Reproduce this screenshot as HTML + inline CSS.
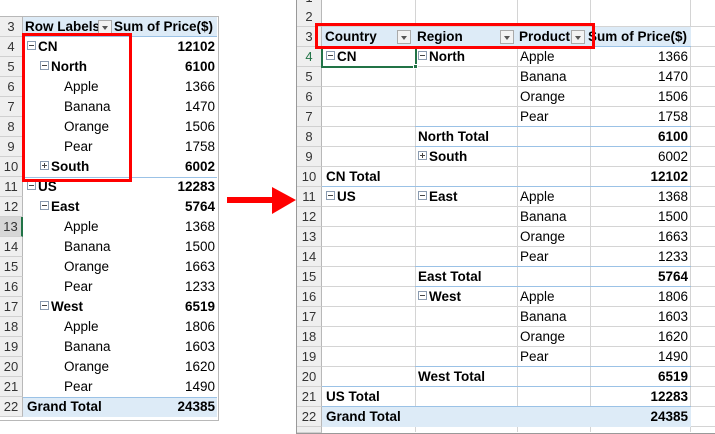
<!DOCTYPE html>
<html><head><meta charset="utf-8"><style>
body{margin:0;width:715px;height:434px;background:#fff;position:relative;overflow:hidden;font-family:"Liberation Sans",sans-serif;font-size:13.5px;color:#000}
.a{position:absolute;box-sizing:border-box;white-space:nowrap}
.rh{background:#efefef;border-bottom:1px solid #d0d0d0;border-right:1px solid #b8b8b8;text-align:center;color:#333;font-size:13px;line-height:19px}
.b{font-weight:bold}
.r{text-align:right}
.box{display:inline-block;width:9px;height:9px;border:1px solid #8a9bb0;box-sizing:border-box;vertical-align:1px;margin-right:2px;position:relative;background:#fff}
.box:after{content:"";position:absolute;left:1px;top:3px;width:5px;height:1px;background:#444}
.box.p:before{content:"";position:absolute;left:3px;top:1px;width:1px;height:5px;background:#444}
.dd{position:absolute;width:14px;height:14px;border:1px solid #aaa;background:#f3f3f3;box-sizing:border-box}
.dd:after{content:"";position:absolute;left:3px;top:5px;border-left:3.5px solid transparent;border-right:3.5px solid transparent;border-top:4px solid #555}
</style></head><body>
<div id="L"></div><div id="R"></div>
<div class="a" style="left:227px;top:197px;width:47px;height:6px;background:#f00"></div>
<div class="a" style="left:272px;top:187px;width:0;height:0;border-top:13px solid transparent;border-bottom:14px solid transparent;border-left:24px solid #f00"></div>
<script>
var L=document.getElementById('L'),R=document.getElementById('R');
function d(p,s,c,t){var e=document.createElement('div');e.className='a '+(c||'');e.style.cssText=s;if(t!=null)e.innerHTML=t;p.appendChild(e);return e;}
var B='<span class="box"></span>',P='<span class="box p"></span>';
d(L,'left:0;top:16px;width:219px;height:405px;border:1px solid #b8b8b8;border-left:none');
var ld=[[3],[4,B+'CN',0,1,'12102'],[5,B+'North',1,1,'6100'],[6,'Apple',2,0,'1366'],[7,'Banana',2,0,'1470'],[8,'Orange',2,0,'1506'],[9,'Pear',2,0,'1758'],[10,P+'South',1,1,'6002'],[11,B+'US',0,1,'12283'],[12,B+'East',1,1,'5764'],[13,'Apple',2,0,'1368'],[14,'Banana',2,0,'1500'],[15,'Orange',2,0,'1663'],[16,'Pear',2,0,'1233'],[17,B+'West',1,1,'6519'],[18,'Apple',2,0,'1806'],[19,'Banana',2,0,'1603'],[20,'Orange',2,0,'1620'],[21,'Pear',2,0,'1490'],[22,'Grand Total',0,1,'24385']];
ld.forEach(function(r,i){var y=17+i*20;
 d(L,'left:0;top:'+y+'px;width:23px;height:20px;'+(r[0]==13?'background:#d6d6d6;border-right:2px solid #217346;':''),'rh',r[0]);
 if(r[0]==3){d(L,'left:23px;top:'+y+'px;width:194px;height:20px;background:#ddebf7;border-bottom:1px solid #9bc2e6');
  d(L,'left:25px;top:'+(y+2)+'px','b','Row Labels');d(L,'left:98px;top:'+(y+3)+'px','dd');
  d(L,'left:114px;top:'+(y+2)+'px','b','Sum of Price($)');return;}
 if(r[0]==22)d(L,'left:23px;top:'+y+'px;width:194px;height:20px;background:#ddebf7;border-top:1px solid #9bc2e6');
 if(r[0]==11)d(L,'left:23px;top:'+y+'px;width:194px;height:1px;background:#9bc2e6');
 var ind=[27,40,64][r[2]];
 d(L,'left:'+ind+'px;top:'+(y+2)+'px',r[3]?'b':'',r[1]);
 d(L,'left:120px;width:95px;top:'+(y+2)+'px','r '+(r[3]?'b':''),r[4]);
});
d(L,'left:22px;top:33px;width:110px;height:149px;border:3px solid #f00');
d(R,'left:296px;top:0;width:419px;height:434px;border-left:1px solid #999;border-bottom:1px solid #999');
var cols=[322,415,517,590,690,716];
for(var i=1;i<cols.length-1;i++)d(R,'left:'+cols[i]+'px;top:0;width:1px;height:432px;background:#d4d4d4');
d(R,'left:297px;top:-12px;width:25px;height:20px','rh','1');
for(var k=2;k<=22;k++){var y=7+(k-2)*20;
 d(R,'left:297px;top:'+y+'px;width:25px;height:20px;'+(k==4?'color:#217346;':''),'rh',k);
 d(R,'left:322px;top:'+(y+19)+'px;width:394px;height:1px;background:#d4d4d4');}
d(R,'left:297px;top:427px;width:25px;height:6px','rh','');
var y3=27;
d(R,'left:322px;top:'+y3+'px;width:369px;height:20px;background:#ddebf7;border-bottom:1px solid #9bc2e6');
d(R,'left:325px;top:'+(y3+2)+'px','b','Country');d(R,'left:397px;top:'+(y3+3)+'px','dd');
d(R,'left:417px;top:'+(y3+2)+'px','b','Region');d(R,'left:500px;top:'+(y3+3)+'px','dd');
d(R,'left:519px;top:'+(y3+2)+'px','b','Product');d(R,'left:571px;top:'+(y3+3)+'px','dd');
d(R,'left:588px;top:'+(y3+2)+'px','b','Sum of Price($)');
var rd=[[4,B+'CN',B+'North','Apple','1366'],[5,'','','Banana','1470'],[6,'','','Orange','1506'],[7,'','','Pear','1758'],[8,'','North Total','','6100',1],[9,'',P+'South','','6002'],[10,'CN Total','','','12102',1],[11,B+'US',B+'East','Apple','1368'],[12,'','','Banana','1500'],[13,'','','Orange','1663'],[14,'','','Pear','1233'],[15,'','East Total','','5764',1],[16,'',B+'West','Apple','1806'],[17,'','','Banana','1603'],[18,'','','Orange','1620'],[19,'','','Pear','1490'],[20,'','West Total','','6519',1],[21,'US Total','','','12283',1],[22,'Grand Total','','','24385',1]];
rd.forEach(function(r){var y=7+(r[0]-2)*20;
 if(r[0]==22)d(R,'left:322px;top:'+y+'px;width:369px;height:20px;background:#ddebf7');
 if(r[0]==11||r[0]==21||r[0]==22)d(R,'left:322px;top:'+(y-1)+'px;width:369px;height:1px;background:#9bc2e6');
 if(r[0]==9||r[0]==16||r[0]==8||r[0]==15||r[0]==20)d(R,'left:415px;top:'+(y-1)+'px;width:276px;height:1px;background:#9bc2e6');
 d(R,'left:326px;top:'+(y+2)+'px','b',r[1]);
 d(R,'left:418px;top:'+(y+2)+'px','b',r[2]);
 d(R,'left:520px;top:'+(y+2)+'px','',r[3]);
 d(R,'left:592px;width:96px;top:'+(y+2)+'px','r '+(r[5]?'b':''),r[4]);
});
d(R,'left:321px;top:46px;width:96px;height:22px;border:2px solid #217346');
d(R,'left:413px;top:64px;width:5px;height:5px;background:#217346;border:1px solid #fff');
d(R,'left:315px;top:23px;width:280px;height:26px;border:3px solid #f00');
</script>
</body></html>
